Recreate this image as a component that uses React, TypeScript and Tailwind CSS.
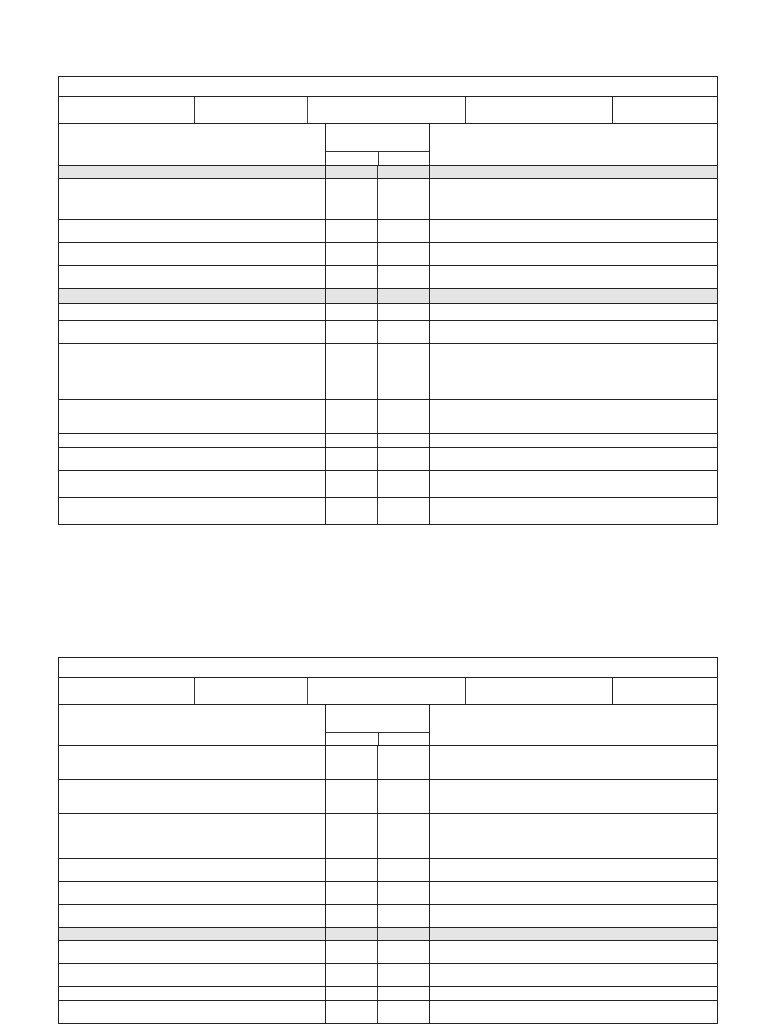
type Row = { h: string; shade?: boolean };

// body rows of the first sheet, heights include the top rule
const firstRows: Row[] = [
  { h: 'h-[13px]', shade: true },
  { h: 'h-[41px]' },
  { h: 'h-[23px]' },
  { h: 'h-[23px]' },
  { h: 'h-[23px]' },
  { h: 'h-[15px]', shade: true },
  { h: 'h-[17px]' },
  { h: 'h-[23px]' },
  { h: 'h-[56px]' },
  { h: 'h-[34px]' },
  { h: 'h-[14px]' },
  { h: 'h-[23px]' },
  { h: 'h-[27px]' },
  { h: 'h-[27px]' },
];

const secondRows: Row[] = [
  { h: 'h-[34px]' },
  { h: 'h-[34px]' },
  { h: 'h-[45px]' },
  { h: 'h-[23px]' },
  { h: 'h-[23px]' },
  { h: 'h-[23px]' },
  { h: 'h-[13px]', shade: true },
  { h: 'h-[23px]' },
  { h: 'h-[23px]' },
  { h: 'h-[14px]' },
  { h: 'h-[23px]' },
];

const BodyRow = ({ row }: { row: Row }) => (
  <div className={`flex border-t border-[#222] ${row.h} ${row.shade ? 'bg-[#e5e5e5]' : 'bg-white'}`}>
    <div className="w-[266px]" />
    <div className="w-[52px] border-l border-[#222]" />
    <div className="w-[52px] border-l border-[#333]" />
    <div className="flex-1 border-l border-[#222]" />
  </div>
);

const Sheet = ({ rows, headTop, headBottom }: { rows: Row[]; headTop: string; headBottom: string }) => (
  <div className="w-[660px] border border-[#222] bg-white">
    <div className="h-[19px]" />
    <div className="flex h-[27px] border-t border-[#222]">
      <div className="w-[135px]" />
      <div className="w-[113px] border-l border-[#333]" />
      <div className="w-[158px] border-l border-[#444]" />
      <div className="w-[147px] border-l border-[#333]" />
      <div className="flex-1 border-l border-[#222]" />
    </div>
    <div className="flex border-t border-[#222]">
      <div className="w-[266px]" />
      <div className="flex w-[104px] flex-col border-l border-[#222]">
        <div className={headTop} />
        <div className={`flex border-t border-[#333] ${headBottom}`}>
          <div className="w-[52px]" />
          <div className="flex-1 border-l border-[#333]" />
        </div>
      </div>
      <div className="flex-1 border-l border-[#222]" />
    </div>
    {rows.map((r, i) => (
      <BodyRow key={i} row={r} />
    ))}
  </div>
);

export default function App() {
  return (
    <div className="min-h-[1024px] w-[768px] bg-white pl-[58px] pt-[76px] font-['Liberation_Sans',sans-serif]">
      <Sheet rows={firstRows} headTop="h-[27px]" headBottom="h-[14px]" />
      <div className="mt-[132px]">
        <Sheet rows={secondRows} headTop="h-[27px]" headBottom="h-[13px]" />
      </div>
    </div>
  );
}
